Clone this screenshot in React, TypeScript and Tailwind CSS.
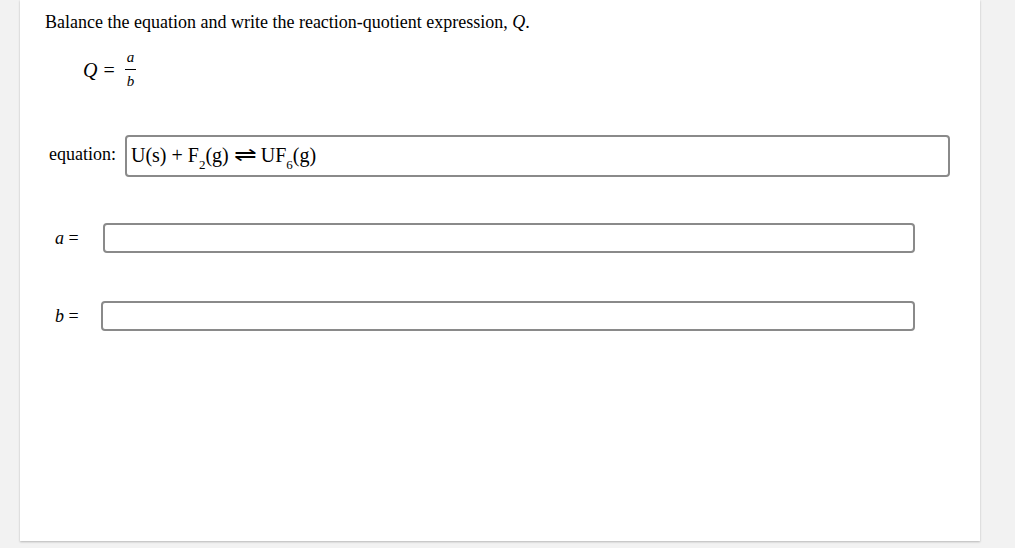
export default function App() {
  const serif = { fontFamily: '"Liberation Serif", "Times New Roman", serif' };
  return (
    <div className="h-[548px] w-[1015px] overflow-hidden bg-[#f2f2f2]" style={serif}>
      <div className="ml-[20px] h-[541px] w-[960px] bg-white shadow-[0_1px_2px_rgba(0,0,0,0.25)] text-black">
        {/* prompt */}
        <p className="pl-[25px] pt-[12px] text-[18px] leading-[20px]">
          Balance the equation and write the reaction-quotient expression, <i>Q</i>.
        </p>

        {/* Q = a / b */}
        <div className="ml-[63px] mt-[18px] flex items-center text-[20px]">
          <i>Q</i>
          <span className="ml-[6px] mr-[10px]">=</span>
          <span className="inline-flex flex-col items-center text-[15px] leading-[15px]">
            <i className="px-[2px]">a</i>
            <span className="my-[4px] h-[1px] w-[11px] bg-black" />
            <i className="px-[2px]">b</i>
          </span>
        </div>

        {/* equation */}
        <div className="mt-[46px] ml-[29px] flex items-start">
          <span className="mt-[9px] mr-[9px] text-[18px] leading-[20px]">equation:</span>
          <div className="h-[42px] w-[825px] rounded-[4px] border-2 border-[#8a8a8a] pl-[4px] pt-[7px] text-[20px] leading-[22px]">
            U(s) + F<sub className="text-[13px] align-[-4px]">2</sub>(g){" "}
            <span className="mx-[4px] inline-block scale-x-[1.6] align-[1px] text-[17px]">⇌</span> UF
            <sub className="text-[13px] align-[-4px]">6</sub>(g)
          </div>
        </div>

        {/* a = */}
        <div className="mt-[46px] ml-[35px] flex items-center">
          <span className="w-[48px] text-[18px]">
            <i>a</i> =
          </span>
          <div className="h-[30px] w-[812px] rounded-[4px] border-2 border-[#8a8a8a]" />
        </div>

        {/* b = */}
        <div className="mt-[48px] ml-[35px] flex items-center">
          <span className="w-[46px] text-[18px]">
            <i>b</i> =
          </span>
          <div className="h-[30px] w-[814px] rounded-[4px] border-2 border-[#8a8a8a]" />
        </div>
      </div>
    </div>
  );
}
